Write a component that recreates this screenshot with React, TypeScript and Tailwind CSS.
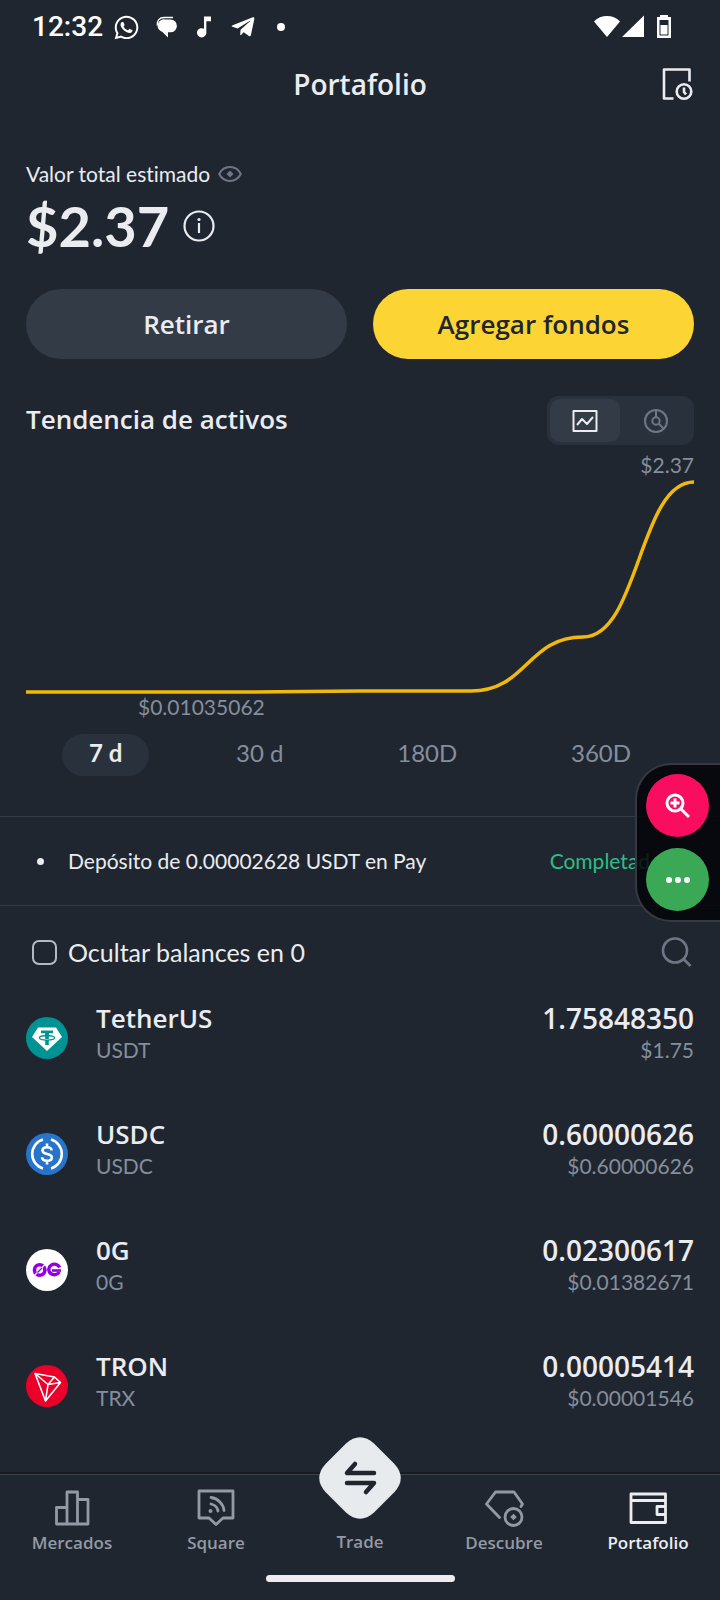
import { useState } from "react";
import { FaTelegramPlane, FaWhatsapp } from "react-icons/fa";
import { MdMusicNote } from "react-icons/md";

type Asset = {
  name: string;
  symbol: string;
  amount: string;
  value: string;
  logo: React.ReactNode;
};

const logoClass = "mt-4 size-[42px] shrink-0";

const TetherLogo = () => (
  <svg viewBox="0 0 42 42" className={logoClass} aria-hidden="true">
    <circle cx="21" cy="21" r="21" fill="#009393" />
    <path d="M12 10.500h18L36 20 21 34 6 20Z" fill="#fff" />
    <path d="M15 13.500h12v2.800h-4.200V28h-3.600V16.300H15Z" fill="#009393" />
    <ellipse cx="21" cy="20.800" rx="7.600" ry="2.300" fill="#fff" stroke="#009393" strokeWidth="1.300" />
    <path d="M19.200 16h3.600v6h-3.600Z" fill="#009393" />
  </svg>
);

const UsdcLogo = () => (
  <svg viewBox="0 0 42 42" className={logoClass} fill="none" stroke="#fff" aria-hidden="true">
    <circle cx="21" cy="21" r="21" fill="#2775ca" stroke="none" />
    <path d="M17 6.600a15 15 0 0 0 0 28.800M25 6.600a15 15 0 0 1 0 28.800" strokeWidth="2.600" />
    <path d="M21 10.500v4M21 27.500v4M25.500 17.500c0-2-1.800-3.200-4.500-3.200s-4.500 1.300-4.500 3.300c0 4.800 9.300 2.200 9.300 6.900 0 2-1.900 3.300-4.800 3.300s-4.900-1.400-4.900-3.500" strokeWidth="2.600" />
  </svg>
);

const ZeroGLogo = () => (
  <svg viewBox="0 0 42 42" className={logoClass} fill="none" stroke="#9200e1" aria-hidden="true">
    <circle cx="21" cy="21" r="21" fill="#fff" stroke="none" />
    <circle cx="13.700" cy="21" r="5.200" strokeWidth="3.600" />
    <path d="M8.500 26.500 19 15.500" stroke="#fff" strokeWidth="1.200" />
    <path d="m11.500 23.500 4.500-4.500" strokeWidth="1.300" />
    <path d="M33.600 18.500A5.600 5.300 0 1 0 33.300 23" strokeWidth="3.400" />
    <path d="M26 21.500H35" strokeWidth="2.600" />
  </svg>
);

const TronLogo = () => (
  <svg viewBox="0 0 42 42" className={logoClass} fill="none" stroke="#fff" strokeLinejoin="round" aria-hidden="true">
    <circle cx="21" cy="21" r="21" fill="#eb0029" stroke="none" />
    <path d="M9 8.500 28.500 12 34.500 17.500 19.500 36ZM9 8.500 22 19.500 28.500 12M22 19.500 34.500 17.500M22 19.500 19.500 36" strokeWidth="1.600" />
  </svg>
);

const assets: Asset[] = [
  { name: "TetherUS", symbol: "USDT", amount: "1.75848350", value: "$1.75", logo: <TetherLogo /> },
  { name: "USDC", symbol: "USDC", amount: "0.60000626", value: "$0.60000626", logo: <UsdcLogo /> },
  { name: "0G", symbol: "0G", amount: "0.02300617", value: "$0.01382671", logo: <ZeroGLogo /> },
  { name: "TRON", symbol: "TRX", amount: "0.00005414", value: "$0.00001546", logo: <TronLogo /> },
];

const ranges = ["7 d", "30 d", "180D", "360D"];

function StatusBar() {
  return (
    <div className="flex h-[54px] items-center justify-between pr-12 pl-8 text-white">
      <div className="flex items-center">
        <span className="font-[Roboto,sans-serif] text-[28px] leading-8 font-medium">12:32</span>
        <FaWhatsapp className="ml-[10px] size-[27px]" />
        <svg viewBox="0 0 22 22" className="ml-4 size-[22px]" fill="currentColor" aria-hidden="true">
          <path d="M9.500 3.500h5a6.400 6.400 0 0 1 0 12.800h-2.500V21.500l-5.500-5.500A6.400 6.400 0 0 1 9.500 3.500Z" />
          <path d="M1.200 9.500C.8 4.500 3.500 1.500 8 1.500h9" fill="none" stroke="currentColor" strokeWidth="1.300" />
        </svg>
        <MdMusicNote className="ml-3 size-7" />
        <FaTelegramPlane className="ml-3 size-[26px]" />
        <span className="ml-[21px] size-2 rounded-full bg-white" />
      </div>
      <svg viewBox="0 0 78 24" className="h-6 w-[78px]" fill="currentColor" aria-hidden="true">
        <path d="M0 6.500C7-.8 19-.8 26 6.500L13 22ZM28 22 50 .5V22Z" />
        <path d="M66 0h8v2h3v21H63V2h3ZM65.500 5v15.500h9V5Z" fillRule="evenodd" />
        <path d="M66.500 10h7v9.500h-7Z" />
      </svg>
    </div>
  );
}

function TrendChart() {
  return (
    <svg
      viewBox="0 0 668 218"
      preserveAspectRatio="none"
      className="block h-[218px] w-full"
      role="img"
      aria-label="Tendencia de activos"
    >
      <path
        d="M0 215H223C278 215 278 214 334 214H445C501 214 501 160 557 160C613 160 613 5 668 5"
        fill="none"
        stroke="#f0b90b"
        strokeWidth="3.500"
      />
    </svg>
  );
}

const navIcon = "h-10 w-10";
const navItem = "flex flex-1 flex-col items-center pt-3 text-[17px] leading-6";

function BottomNav() {
  return (
    <nav className="mt-auto border-t-2 border-[#1a1b20]">
      <div className="flex h-[94px] border-t border-[#3a404b] font-['Open_Sans',sans-serif] font-semibold text-[#929aa5]">
        <a href="#mercados" className={navItem}>
          <svg viewBox="0 0 40 40" className={navIcon} fill="none" stroke="currentColor" strokeWidth="2.800" strokeLinejoin="round" aria-hidden="true">
            <path d="M4.500 20.500H15V37H4.500ZM15 5h10.500v32H15ZM25.500 12.500H36V37H25.500Z" />
          </svg>
          <span className="mt-1">Mercados</span>
        </a>
        <a href="#square" className={navItem}>
          <svg viewBox="0 0 40 40" className={navIcon} fill="none" stroke="currentColor" strokeWidth="2.800" strokeLinejoin="round" strokeLinecap="round" aria-hidden="true">
            <path d="M3 4h34v27H27L20 37.500 13 31H3Z" />
            <path d="M15 10.500c7 1 12.500 6.500 13 13M15 17c4 1 6.500 3.500 7 7" />
            <circle cx="14.500" cy="24" r="2" fill="currentColor" stroke="none" />
          </svg>
          <span className="mt-1">Square</span>
        </a>
        <a href="#trade" className={navItem}>
          <svg viewBox="0 0 82 82" className="-mt-[50px] size-[82px] shrink-0" aria-hidden="true">
            <path d="M27 6.500Q41-6 55 6.500L75.500 27Q88 41 75.500 55L55 75.500Q41 88 27 75.500L6.500 55Q-6 41 6.500 27Z" fill="#e8ebee" />
            <path d="M36 27 28 36H55M28 46H55L47 55" fill="none" stroke="#202630" strokeWidth="4.500" strokeLinecap="round" strokeLinejoin="round" />
          </svg>
          <span className="mt-[11px]">Trade</span>
        </a>
        <a href="#descubre" className={navItem}>
          <svg viewBox="0 0 40 40" className={navIcon} fill="none" stroke="currentColor" strokeWidth="2.800" strokeLinejoin="round" strokeLinecap="round" aria-hidden="true">
            <path d="M15.500 30.500 2.500 17 11.500 5H30L38.500 17 37 19.500" />
            <circle cx="29.500" cy="30" r="8.500" />
            <path d="m29.500 26.700 3.300 3.300-3.300 3.300-3.300-3.300Z" fill="currentColor" stroke="none" />
          </svg>
          <span className="mt-1">Descubre</span>
        </a>
        <a href="#portafolio" aria-current="page" className="flex flex-1 flex-col items-center pt-3 text-[17px] leading-6 text-[#eaecef]">
          <svg viewBox="0 0 40 40" className={navIcon} fill="none" stroke="currentColor" strokeWidth="2.800" strokeLinejoin="round" aria-hidden="true">
            <path d="M3 7h34.500v28.500H3ZM3 13.500h34.500M37.500 19.500H29v8h8.500" />
          </svg>
          <span className="mt-1">Portafolio</span>
        </a>
      </div>
      <div className="flex h-8 items-start justify-center pt-[7px]">
        <span className="h-[7px] w-[189px] rounded-full bg-[#eeecef]" />
      </div>
    </nav>
  );
}

function FloatingTools() {
  return (
    <div className="absolute top-[763px] right-0 flex flex-col gap-[11px] rounded-l-[36px] border-2 border-r-0 border-[#363a40] bg-[#050508]/85 py-[9px] pr-[11px] pl-[9px]">
      <button type="button" aria-label="Acercar" className="flex size-[63px] items-center justify-center rounded-full bg-[#f80d5f] text-white">
        <svg viewBox="0 0 26 26" className="size-[26px]" fill="none" stroke="currentColor" strokeWidth="3" aria-hidden="true">
          <circle cx="10" cy="10" r="8" />
          <path d="M10 5.500v9M5.500 10h9M15.500 15.500l8.500 8.500" />
        </svg>
      </button>
      <button type="button" aria-label="Más opciones" className="flex size-[63px] items-center justify-center gap-[3px] rounded-full bg-[#3ba856]">
        <span className="size-[6px] rounded-full bg-white" />
        <span className="size-[6px] rounded-full bg-white" />
        <span className="size-[6px] rounded-full bg-white" />
      </button>
    </div>
  );
}

export default function App() {
  const [range, setRange] = useState("7 d");
  const [hideZero, setHideZero] = useState(false);

  return (
    <div className="relative flex min-h-screen flex-col bg-[#202630] font-[Lato,sans-serif] text-[#eaecef] [font-variant-ligatures:none]">
      <StatusBar />

      <header className="grid h-[60px] grid-cols-[1fr_auto_1fr] items-center px-[26px]">
        <h1 className="col-start-2 font-['Open_Sans',sans-serif] text-[28px] leading-9 font-semibold">Portafolio</h1>
        <button type="button" aria-label="Historial" className="justify-self-end">
          <svg viewBox="0 0 34 34" className="size-[34px]" fill="none" stroke="currentColor" strokeWidth="2.600" strokeLinejoin="round" aria-hidden="true">
            <path d="M13.500 31.500H4V2.500h25.500v12" />
            <circle cx="24" cy="24.500" r="7.300" />
            <path d="M24 20.500V25l2 2.500" />
          </svg>
        </button>
      </header>

      <main>
        <section className="px-[26px] pt-12">
          <div className="flex items-center gap-2 text-[21px] leading-6">
            <span>Valor total estimado</span>
            <button type="button" aria-label="Ocultar valor" className="text-[#6f7787]">
              <svg viewBox="0 0 24 18" className="h-[18px] w-6" fill="none" stroke="currentColor" strokeWidth="2" aria-hidden="true">
                <path d="M1.200 9C6-.2 18-.2 22.800 9 18 18.200 6 18.200 1.200 9Z" />
                <path d="m12 5.500 3.500 3.500-3.500 3.500L8.500 9Z" fill="currentColor" stroke="none" />
              </svg>
            </button>
          </div>
          <div className="mt-[10px] flex items-center gap-[14px]">
            <span className="text-[56px] leading-[60px] font-bold">$2.37</span>
            <button type="button" aria-label="Información">
              <svg viewBox="0 0 32 32" className="size-8" fill="none" stroke="currentColor" strokeWidth="2.200" aria-hidden="true">
                <circle cx="16" cy="16" r="14.500" />
                <path d="M16 13v10" />
                <circle cx="16" cy="9.500" r="1.600" fill="currentColor" stroke="none" />
              </svg>
            </button>
          </div>
          <div className="mt-[33px] grid grid-cols-2 gap-[26px] font-['Open_Sans',sans-serif] text-[26px] leading-8 font-semibold">
            <button type="button" className="h-[70px] rounded-full bg-[#333b47]">Retirar</button>
            <button type="button" className="h-[70px] rounded-full bg-[#fcd535] text-[#202630]">Agregar fondos</button>
          </div>
        </section>

        <section className="px-[26px] pt-[37px]">
          <div className="flex items-center justify-between">
            <h2 className="pb-1 font-['Open_Sans',sans-serif] text-[26px] leading-8 font-semibold">Tendencia de activos</h2>
            <div className="flex rounded-xl bg-[#29313d] p-[3px]">
              <button type="button" aria-label="Gráfico" aria-pressed="true" className="flex h-[43px] w-[70px] items-center justify-center rounded-[10px] bg-[#333b47]">
                <svg viewBox="0 0 26 24" className="h-6 w-[26px]" fill="none" stroke="currentColor" strokeWidth="2" strokeLinejoin="round" aria-hidden="true">
                  <path d="M1.500 2h23v20h-23Z" />
                  <path d="m5 16 5-6 5 5 6-7" />
                </svg>
              </button>
              <button type="button" aria-label="Distribución" aria-pressed="false" className="flex h-[43px] w-[71px] items-center justify-center text-[#6f7787]">
                <svg viewBox="0 0 26 26" className="size-[26px]" fill="none" stroke="currentColor" strokeWidth="2" aria-hidden="true">
                  <circle cx="13" cy="13" r="11" />
                  <circle cx="13" cy="13" r="3.700" />
                  <path d="M13 2v7.300M15.600 15.600l5.200 5.200" />
                </svg>
              </button>
            </div>
          </div>
          <p className="mt-2 text-right text-[21px] leading-6 text-[#848e9c]">$2.37</p>
          <TrendChart />
          <p className="pl-28 text-[21px] leading-6 text-[#848e9c]">$0.01035062</p>
          <div role="tablist" className="mt-[15px] flex justify-between px-9 text-[24px] leading-8">
            {ranges.map((label) => (
              <button
                key={label}
                type="button"
                role="tab"
                aria-selected={range === label}
                onClick={() => setRange(label)}
                className={
                  range === label
                    ? "h-[42px] rounded-full bg-[#29313d] px-[27px] pb-1 font-bold"
                    : "h-[42px] rounded-full px-[27px] pb-1 text-[#848e9c]"
                }
              >
                {label}
              </button>
            ))}
          </div>
        </section>

        <a href="#deposito" className="mt-10 flex h-[90px] items-center justify-between border-y border-[#333b47] pr-[26px] pl-[37px] text-[21px] leading-6">
          <span className="flex items-center gap-6">
            <span className="size-[7px] rounded-full bg-[#eaecef]" />
            Depósito de 0.00002628 USDT en Pay
          </span>
          <span className="pr-8 text-[#2ebd85]">Completado</span>
        </a>

        <section className="px-[26px]">
          <div className="flex h-[92px] items-center justify-between">
            <label className="flex items-center gap-[11px] pl-[6px] text-[25px] leading-8">
              <input
                type="checkbox"
                checked={hideZero}
                onChange={(event) => setHideZero(event.target.checked)}
                className="size-[25px] appearance-none rounded-[7px] border-2 border-[#b3bac4] checked:bg-[#fcd535]"
              />
              Ocultar balances en 0
            </label>
            <button type="button" aria-label="Buscar" className="text-[#6f7787]">
              <svg viewBox="0 0 34 34" className="size-[34px]" fill="none" stroke="currentColor" strokeWidth="2.600" aria-hidden="true">
                <circle cx="15" cy="15.500" r="12" />
                <path d="m23.500 24 7 7" />
              </svg>
            </button>
          </div>
          <ul className="pt-[3px]">
            {assets.map((asset) => (
              <li key={asset.name} className="flex h-[116px] items-start">
                {asset.logo}
                <div className="ml-7 flex-1">
                  <p className="font-['Open_Sans',sans-serif] text-[26px] leading-[34px] font-semibold">{asset.name}</p>
                  <p className="text-[21px] leading-[30px] text-[#848e9c]">{asset.symbol}</p>
                </div>
                <div className="text-right">
                  <p className="font-['Open_Sans',sans-serif] text-[28px] leading-[34px] font-semibold">{asset.amount}</p>
                  <p className="text-[21px] leading-[30px] text-[#848e9c]">{asset.value}</p>
                </div>
              </li>
            ))}
          </ul>
        </section>
      </main>

      <BottomNav />
      <FloatingTools />
    </div>
  );
}
